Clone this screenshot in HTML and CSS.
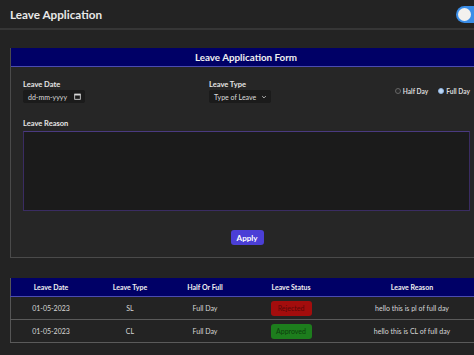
FILE: index.html
```html
<!DOCTYPE html>
<html>
<head>
<meta charset="utf-8">
<link rel="stylesheet" href="styles.css">
</head>
<body>
<header class="topbar">
  <h1 class="title">Leave Application</h1>
  <span class="toggle"><span class="knob"></span></span>
</header>
<main class="content">
  <section class="card">
    <div class="card-head">Leave Application Form</div>
    <div class="card-body">
      <div class="row">
        <div class="field date-field">
          <label class="lbl">Leave Date</label>
          <span class="ctrl date"><span>dd-mm-yyyy</span>
            <svg class="cal" viewBox="0 0 10 10" width="7" height="7"><rect x="1" y="1.5" width="8" height="7.5" fill="none" stroke="#ddd" stroke-width="1.2"/><rect x="1" y="1.5" width="8" height="2" fill="#ddd"/></svg>
          </span>
        </div>
        <div class="field type-field">
          <label class="lbl">Leave Type</label>
          <span class="ctrl select"><span>Type of Leave</span>
            <svg viewBox="0 0 10 10" width="6" height="6"><path d="M2 3.5 L5 6.5 L8 3.5" fill="none" stroke="#ddd" stroke-width="1.3"/></svg>
          </span>
        </div>
        <div class="radios">
          <span class="radio"><span class="dot"></span>Half Day</span>
          <span class="radio"><span class="dot on"></span>Full Day</span>
        </div>
      </div>
      <label class="lbl reason-lbl">Leave Reason</label>
      <div class="textarea"></div>
      <div class="actions"><button class="apply">Apply</button></div>
    </div>
  </section>
  <table class="tbl">
    <thead>
      <tr><th class="c1">Leave Date</th><th class="c2">Leave Type</th><th class="c3">Half Or Full</th><th class="c4">Leave Status</th><th class="c5">Leave Reason</th></tr>
    </thead>
    <tbody>
      <tr><td>01-05-2023</td><td>SL</td><td>Full Day</td><td><span class="badge rej">Rejected</span></td><td>hello this is pl of full day</td></tr>
      <tr><td>01-05-2023</td><td>CL</td><td>Full Day</td><td><span class="badge ok">Approved</span></td><td>hello this is CL of full day</td></tr>
    </tbody>
  </table>
</main>
</body>
</html>
```
FILE: styles.css
```css
html, body { margin: 0; padding: 0; }
body {
  background: #232323;
  font-family: Lato, "Liberation Sans", sans-serif;
  color: #e6e6e6;
  width: 474px;
  height: 355px;
  overflow: hidden;
}
.topbar {
  height: 28px;
  border-bottom: 2px solid #363636;
  display: flex;
  align-items: center;
  justify-content: space-between;
  padding-left: 10px;
  position: relative;
}
.title { margin: 0; font-size: 11.7px; font-weight: 700; color: #e8e8e8; }
.toggle {
  position: absolute; right: -12px; top: 6px;
  width: 30px; height: 17px; border-radius: 9px; background: #3b8ee8;
}
.knob {
  position: absolute; left: 2px; top: 2px; width: 13px; height: 13px;
  border-radius: 50%; background: #f3f1ee;
}
.content { padding: 18px 0 0 10px; width: 472px; }
.card {
  width: 472px;
  background: #262626;
  border: 1px solid #4a4a4a;
  border-top: none;
  box-sizing: border-box;
}
.card-head {
  background: #000066;
  color: #f0f0f0;
  font-weight: 700;
  font-size: 9.8px;
  height: 18px;
  line-height: 18px;
  text-align: center;
  border-bottom: 1px solid #4b4bb0;
}
.card-body { padding: 13px 11px 12px 12px; }
.row { display: flex; align-items: flex-start; }
.field { display: flex; flex-direction: column; }
.date-field { width: 186px; }
.type-field { width: 150px; }
.lbl { font-size: 7.5px; font-weight: 700; color: #e6e6e6; line-height: 9px; }
.ctrl {
  margin-top: 1px;
  height: 13px;
  background: #1b1b1b;
  display: flex; align-items: center; justify-content: space-between;
  font-size: 7px; color: #dcdcdc; padding: 0 4px 0 5px; box-sizing: border-box;
  border-radius: 2px;
}
.date { width: 62px; }
.select { width: 62px; }
.radios { margin-left: auto; display: flex; gap: 10px; margin-top: 7px; }
.radio { display: flex; align-items: center; font-size: 6.6px; font-weight: 700; color: #dcdcdc; gap: 2px; }
.dot { width: 4px; height: 4px; border-radius: 50%; border: 1px solid #666; background: #2a2a2a; }
.dot.on { background: #bcd6f3; border-color: #8fb4e2; }
.reason-lbl { display: block; margin-top: 16px; }
.textarea {
  margin-top: 3px;
  height: 80px;
  background: #1b1b1b;
  border: 1px solid #3a2c62;
  border-top-color: #4a3a80;
  box-sizing: border-box;
}
.actions { display: flex; justify-content: center; margin-top: 19px; }
.apply {
  background: #4b3fd6;
  color: #fff;
  border: none;
  border-radius: 3px;
  font-family: inherit;
  font-size: 8px;
  font-weight: 700;
  width: 33px; height: 15px; padding: 0;
  margin-left: 1px;
}
.tbl {
  margin-top: 20px;
  width: 472px;
  border-collapse: collapse;
  font-size: 7px;
  table-layout: fixed;
  border: 1px solid #555;
  border-top: none;
}
.tbl th {
  background: #000066;
  color: #f0f0f0;
  font-weight: 700;
  height: 18px;
  border-bottom: 1px solid #4b4bb0;
  padding: 0;
}
.c1 { width: 80px; } .c2 { width: 78px; } .c3 { width: 72px; } .c4 { width: 100px; } .c5 { width: 142px; }
.tbl td {
  text-align: center;
  color: #d8d8d8;
  height: 22px;
  padding: 0;
  border-bottom: 1px solid #5a5a5a;
}
.badge {
  display: inline-block;
  width: 41px; height: 15px; line-height: 15px;
  border-radius: 3px;
  font-size: 7px;
}
.rej { background: #a30d0d; color: #5a0808; }
.ok { background: #1d7d1d; color: #0c3f0c; }
```
